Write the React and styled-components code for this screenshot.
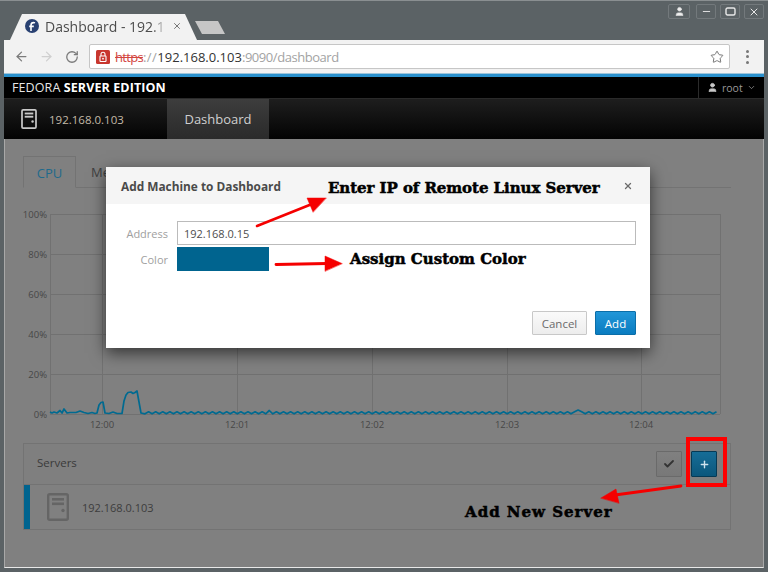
import React from 'react';
import styled, { createGlobalStyle } from 'styled-components';
import { ArrowLeft, ArrowRight, RotateCw, Star, X, Minus, Check, Plus, ChevronDown, User } from 'lucide-react';

const Global = createGlobalStyle`
  html, body { margin: 0; padding: 0; background: #5b6265; }
  * { box-sizing: border-box; }
`;

const Frame = styled.div`
  position: relative;
  width: 768px;
  height: 572px;
  overflow: hidden;
  display: flex;
  flex-direction: column;
  padding: 2px 4px 4px 4px;
  background: #5b6265;
  box-shadow: inset 0 1px #8a8f91;
  font-family: "Open Sans", "Liberation Sans", sans-serif;
`;

const TitleBar = styled.div`
  height: 38px;
  display: flex;
  align-items: flex-end;
  flex: none;
  position: relative;
`;

const ActiveTab = styled.div`
  width: 187px;
  height: 26px;
  margin-left: 6px;
  padding: 0 0 2px 15px;
  display: flex;
  align-items: center;
  background: #f2f2f2;
  clip-path: polygon(0 100%, 12px 0, 175px 0, 187px 100%);
  color: #4c4c4c;
  font-size: 14px;
  white-space: nowrap;
`;

const TabTitle = styled.span`
  margin-left: 6px;
  width: 122px;
  -webkit-mask-image: linear-gradient(to right, #000 88%, transparent);
  mask-image: linear-gradient(to right, #000 88%, transparent);
`;

const TabClose = styled.span`
  display: flex;
  margin-left: 5px;
  color: #777;
`;

const NewTab = styled.div`
  width: 30px;
  height: 13px;
  margin: 0 0 6px -2px;
  background: #c6c6c6;
  clip-path: polygon(0 0, 23px 0, 30px 100%, 7px 100%);
`;

const WindowControls = styled.div`
  display: flex;
  align-items: flex-start;
  gap: 4px;
  margin-left: auto;
  align-self: flex-start;
  padding: 2px 0 0 0;
`;

const ControlButton = styled.div`
  width: ${p => p.$w || 20}px;
  height: 15px;
  border: 1px solid #73797c;
  border-radius: 2px;
  display: flex;
  align-items: center;
  justify-content: center;
  color: #e8e8e8;
  margin-right: ${p => p.$gap || 0}px;
`;

const Toolbar = styled.div`
  height: 33px;
  flex: none;
  background: #f2f2f2;
  display: flex;
  align-items: center;
  padding: 0 0 0 5px;
`;

const NavIcon = styled.div`
  width: 25px;
  display: flex;
  justify-content: center;
  color: ${p => (p.$off ? '#cfcfcf' : '#7b7b7b')};
`;

const Omnibox = styled.div`
  margin-left: 5px;
  width: 641px;
  height: 25px;
  background: #fff;
  border: 1px solid #c6c6c6;
  border-radius: 2px;
  display: flex;
  align-items: center;
  padding: 0 5px 0 6px;
  font-size: 13px;
  color: #a3a3a3;
  white-space: nowrap;
`;

const StrikeScheme = styled.span`
  color: #d2453f;
  text-decoration: line-through;
  margin-left: 5px;
  letter-spacing: -0.7px;
`;

const Separator = styled.span`
  letter-spacing: 0.5px;
`;

const Host = styled.span`
  color: #333;
`;

const PathPart = styled.span`
  letter-spacing: -0.45px;
`;

const StarIcon = styled.div`
  margin-left: auto;
  display: flex;
  color: #6e6e6e;
`;

const MenuDots = styled.div`
  display: flex;
  flex-direction: column;
  gap: 2.5px;
  margin-left: 16px;
`;

const Dot = styled.i`
  width: 3px;
  height: 3px;
  border-radius: 50%;
  background: #777;
`;

const AccentLine = styled.div`
  height: 4px;
  flex: none;
  background: #2a90cc;
  border-top: 1px solid #9fc4da;
`;

const TopBar = styled.div`
  height: 22px;
  flex: none;
  background: #000;
  display: flex;
  align-items: stretch;
  justify-content: space-between;
  border-bottom: 1px solid #2a2a2a;
`;

const Brand = styled.div`
  padding-left: 8px;
  font-size: 12.5px;
  line-height: 21px;
  color: #e6e6e6;
  letter-spacing: 0.1px;
  b { font-weight: 700; color: #fff; }
`;

const UserMenu = styled.div`
  width: 66px;
  border-left: 1px solid #2b2b2b;
  display: flex;
  align-items: center;
  gap: 4px;
  padding-left: 8px;
  color: #9a9a9a;
  font-size: 10.5px;
`;

const NavBar = styled.div`
  height: 40px;
  flex: none;
  background: linear-gradient(#1e1e1e, #030303);
  display: flex;
  align-items: stretch;
`;

const HostCell = styled.div`
  width: 163px;
  display: flex;
  align-items: center;
  padding-left: 17px;
  gap: 12px;
  font-size: 11.5px;
  color: #c4baa8;
`;

const NavTab = styled.div`
  width: 102px;
  display: flex;
  align-items: center;
  justify-content: center;
  background: linear-gradient(#3d3d3d, #2a2a2a);
  color: #d0d0d0;
  font-size: 13px;
`;

const Page = styled.div`
  position: relative;
  flex: 1;
  background: #808080;
  padding: 18px 0 0 18px;
  border-bottom: 1px solid #e8e8e8;
  border-right: 1px solid #a8a8a8;
  border-left: 1px solid #a8a8a8;
`;

const Tabs = styled.div`
  width: 708px;
  height: 31px;
  display: flex;
  align-items: flex-end;
  border-bottom: 1px solid #737373;
`;

const Tab = styled.div`
  height: 31px;
  padding: 1px 15px 0;
  display: flex;
  align-items: center;
  font-size: 13px;
  color: #3f3f3f;
  ${p => p.$active && `
    width: 53px;
    padding: 1px 0 0;
    justify-content: center;
    color: #1e6a8c;
    border: 1px solid #737373;
    border-bottom: 1px solid #808080;
    margin-bottom: -1px;
    height: 32px;
  `}
`;

const ChartSvg = styled.svg`
  display: block;
  margin-top: 17px;
  width: 708px;
  height: 238px;
  font-family: "Open Sans", sans-serif;
`;

const Panel = styled.div`
  width: 708px;
  height: 87px;
  border: 1px solid #737373;
  display: flex;
  flex-direction: column;
`;

const PanelHead = styled.div`
  height: 41px;
  flex: none;
  border-bottom: 1px solid #737373;
  background: #7f7f7f;
  display: flex;
  align-items: center;
  padding: 0 13px 0 13px;
  font-size: 11.5px;
  color: #3a3a3a;
`;

const PanelTitle = styled.span`
  margin-bottom: 3px;
`;

const HeadActions = styled.div`
  margin-left: auto;
  display: flex;
  gap: 9px;
`;

const SquareBtn = styled.div`
  width: 26px;
  height: 26px;
  border-radius: 1px;
  display: flex;
  align-items: center;
  justify-content: center;
  ${p => p.$primary ? `
    background: linear-gradient(#166d97, #0b577c);
    border: 1px solid #053a55;
    color: #cfe3ee;
  ` : `
    background: linear-gradient(#808080, #787878);
    border: 1px solid #6a6a6a;
    color: #333;
  `}
`;

const ServerRow = styled.div`
  flex: 1;
  display: flex;
  align-items: center;
  border-left: 6px solid #00648f;
  padding-left: 17px;
  gap: 13px;
  font-size: 11px;
  color: #3d3d3d;
`;

const Modal = styled.div`
  position: absolute;
  left: 101px;
  top: 28px;
  width: 544px;
  height: 181px;
  background: #fff;
  box-shadow: 0 5px 15px rgba(0, 0, 0, 0.6);
  display: flex;
  flex-direction: column;
  color: #333;
`;

const ModalHead = styled.div`
  height: 37px;
  flex: none;
  background: #f5f5f5;
  display: flex;
  align-items: center;
  justify-content: space-between;
  padding: 0 17px 0 15px;
  font-size: 11.85px;
  font-weight: 700;
  color: #4a4a4a;
`;

const CloseBtn = styled.div`
  display: flex;
  color: #6b6b6b;
`;

const Form = styled.div`
  display: grid;
  grid-template-columns: 47px 459px;
  column-gap: 9px;
  row-gap: 2px;
  padding: 17px 14px 0 15px;
  align-items: center;
`;

const Label = styled.div`
  text-align: right;
  font-size: 11px;
  color: #a0a0a0;
`;

const Input = styled.div`
  height: 24px;
  border: 1px solid #bbb;
  display: flex;
  align-items: center;
  padding: 0 6px;
  font-size: 11px;
  color: #4d4d4d;
`;

const Swatch = styled.div`
  width: 92px;
  height: 24px;
  background: #00648f;
`;

const ModalFoot = styled.div`
  margin-top: auto;
  display: flex;
  justify-content: flex-end;
  gap: 8px;
  padding: 0 14px 13px 0;
`;

const Btn = styled.div`
  height: 24px;
  width: ${p => p.$w}px;
  display: flex;
  align-items: center;
  justify-content: center;
  font-size: 11.5px;
  border-radius: 1px;
  ${p => p.$primary ? `
    background: linear-gradient(#2196d8, #0a7cc0);
    border: 1px solid #0b6ea8;
    color: #fff;
  ` : `
    background: linear-gradient(#fafafa, #ededed);
    border: 1px solid #c8c8c8;
    color: #6b6b6b;
  `}
`;

const Annotations = styled.svg`
  position: absolute;
  left: 0;
  top: 0;
  width: 768px;
  height: 572px;
  pointer-events: none;
`;

const Note = styled.div`
  position: absolute;
  left: ${p => p.$x}px;
  top: ${p => p.$y}px;
  font-family: "DejaVu Serif", "Liberation Serif", serif;
  font-weight: 700;
  font-size: 15px;
  line-height: 20px;
  letter-spacing: ${p => p.$ls || 0}px;
  color: #000;
  white-space: nowrap;
  -webkit-text-stroke: 0.5px #000;
`;

const RedBox = styled.div`
  position: absolute;
  left: 686px;
  top: 437px;
  width: 41px;
  height: 50px;
  border: 4px solid #f00;
`;

const ServerGlyph = ({ size = 16, h = 22, color = '#bbb' }) => (
  <svg width={size} height={h} viewBox="0 0 22 28" fill="none">
    <rect x="1.2" y="1.2" width="19.6" height="25.6" rx="1.5" stroke={color} strokeWidth="2.4" />
    <rect x="5" y="5" width="12" height="2.6" fill={color} />
    <rect x="5" y="9.5" width="12" height="2.6" fill={color} />
    <circle cx="16" cy="17.5" r="1.7" fill={color} />
  </svg>
);

const FedoraLogo = () => (
  <svg width="14" height="14" viewBox="0 0 14 14">
    <circle cx="7" cy="7" r="7" fill="#294172" />
    <path d="M6 12V6.2C6 4.6 7 3.6 8.6 3.6c.6 0 1 .1 1.4.3M4.2 7.4h4.6" stroke="#fff" strokeWidth="1.6" fill="none" />
  </svg>
);

const LockBadge = () => (
  <svg width="14" height="14" viewBox="0 0 14 14">
    <rect width="14" height="14" rx="1.5" fill="#c8362e" />
    <rect x="4" y="6" width="6" height="5.5" rx="0.6" fill="none" stroke="#fff" strokeWidth="1.1" />
    <path d="M5 6V4.3a2 2 0 0 1 4 0V6" fill="none" stroke="#fff" strokeWidth="1.1" />
    <circle cx="7" cy="8.7" r="0.9" fill="#fff" />
  </svg>
);

const buildLine = () => {
  const pts = [];
  const special = {
    50: 412, 52: 413, 54: 412, 57: 413, 60: 410.5, 62: 413, 64: 409, 67: 413, 70: 412.5, 76: 412.5, 80: 411, 84: 412.5,
    88: 413.5, 92: 412.5, 95: 413.5, 97: 413,
    99: 405, 101: 402.5, 103: 402, 105: 413, 109: 413.5, 113: 412, 117: 413.5, 122: 413.5,
    124: 401, 126: 395, 128: 392.5, 131: 392, 133: 393.5, 135: 392.5, 137: 391, 139: 402, 141: 413,
  };
  Object.keys(special).map(Number).sort((a, b) => a - b).forEach(x => pts.push([x, special[x]]));
  let x = 145;
  let i = 0;
  while (x <= 720) {
    const bump = x > 575 && x < 580 ? 410 : (x > 266 && x < 270 ? 410.5 : (i % 2 ? 411.8 : 413.8));
    pts.push([x, bump]);
    x += 3.55;
    i += 1;
  }
  return pts.map(([a, b], n) => `${n ? 'L' : 'M'}${(a - 23).toFixed(1)} ${(b - 205).toFixed(1)}`).join(' ');
};

const Chart = () => {
  const grid = '#717171';
  const ys = [['100%', 9], ['80%', 49], ['60%', 89], ['40%', 129], ['20%', 169], ['0%', 209]];
  const xs = [['12:00', 79], ['12:01', 214], ['12:02', 349], ['12:03', 484], ['12:04', 618]];
  return (
    <ChartSvg viewBox="0 0 708 238">
      {ys.map(([t, y]) => (
        <g key={t}>
          <line x1="27" x2="697" y1={y + 0.5} y2={y + 0.5} stroke={grid} />
          <text x="24" y={y + 3.5} fontSize="9.5" textAnchor="end" fill="#474747">{t}</text>
        </g>
      ))}
      <line x1="27.5" x2="27.5" y1="9" y2="209" stroke={grid} />
      <line x1="697.5" x2="697.5" y1="9" y2="209" stroke={grid} />
      {xs.map(([t, x]) => (
        <g key={t}>
          <line x1={x + 0.5} x2={x + 0.5} y1="9" y2="209" stroke={grid} />
          <text x={x} y="223" fontSize="9.5" textAnchor="middle" fill="#474747">{t}</text>
        </g>
      ))}
      <path d={buildLine()} fill="none" stroke="#006a90" strokeWidth="1.7" strokeLinejoin="round" />
    </ChartSvg>
  );
};

export default function App() {
  return (
    <Frame>
      <Global />
      <TitleBar>
        <ActiveTab>
          <FedoraLogo />
          <TabTitle>Dashboard - 192.1</TabTitle>
          <TabClose><X size={10} strokeWidth={2.4} /></TabClose>
        </ActiveTab>
        <NewTab />
        <WindowControls>
          <ControlButton $w={22} $gap={2}><User size={11} fill="#eee" strokeWidth={1.5} /></ControlButton>
          <ControlButton><Minus size={11} strokeWidth={2} /></ControlButton>
          <ControlButton><svg width="11" height="9"><rect x="1" y="1" width="9" height="7" rx="1.5" fill="none" stroke="#e8e8e8" strokeWidth="1.4" /></svg></ControlButton>
          <ControlButton><X size={12} strokeWidth={2} /></ControlButton>
        </WindowControls>
      </TitleBar>
      <Toolbar>
        <NavIcon><ArrowLeft size={15} strokeWidth={2} /></NavIcon>
        <NavIcon $off><ArrowRight size={15} strokeWidth={2} /></NavIcon>
        <NavIcon><RotateCw size={14} strokeWidth={2.2} /></NavIcon>
        <Omnibox>
          <LockBadge />
          <StrikeScheme>https</StrikeScheme><Separator>://</Separator><Host>192.168.0.103</Host><PathPart>:9090/dashboard</PathPart>
          <StarIcon><Star size={14} strokeWidth={1.6} /></StarIcon>
        </Omnibox>
        <MenuDots><Dot /><Dot /><Dot /></MenuDots>
      </Toolbar>
      <AccentLine />
      <TopBar>
        <Brand>FEDORA <b>SERVER EDITION</b></Brand>
        <UserMenu>
          <User size={11} fill="#c8c8c8" color="#c8c8c8" />
          root
          <ChevronDown size={9} strokeWidth={2} />
        </UserMenu>
      </TopBar>
      <NavBar>
        <HostCell>
          <ServerGlyph size={16} h={20} color="#c9c9c9" />
          192.168.0.103
        </HostCell>
        <NavTab>Dashboard</NavTab>
      </NavBar>
      <Page>
        <Tabs>
          <Tab $active>CPU</Tab>
          <Tab>Memory</Tab>
        </Tabs>
        <Chart />
        <Panel>
          <PanelHead>
            <PanelTitle>Servers</PanelTitle>
            <HeadActions>
              <SquareBtn><Check size={12} strokeWidth={3.6} /></SquareBtn>
              <SquareBtn $primary><Plus size={11} strokeWidth={3} /></SquareBtn>
            </HeadActions>
          </PanelHead>
          <ServerRow>
            <ServerGlyph size={22} h={28} color="#656565" />
            192.168.0.103
          </ServerRow>
        </Panel>
        <Modal>
          <ModalHead>
            Add Machine to Dashboard
            <CloseBtn><X size={10} strokeWidth={3} /></CloseBtn>
          </ModalHead>
          <Form>
            <Label>Address</Label>
            <Input>192.168.0.15</Input>
            <Label>Color</Label>
            <Swatch />
          </Form>
          <ModalFoot>
            <Btn $w={55}>Cancel</Btn>
            <Btn $w={41} $primary>Add</Btn>
          </ModalFoot>
        </Modal>
      </Page>
      <Annotations viewBox="0 0 768 572">
        <g fill="#f50000" stroke="#f50000" strokeLinecap="round">
          <line x1="257" y1="226" x2="312" y2="204" strokeWidth="2.6" />
          <polygon points="326,198 307,198 313,212" strokeWidth="0.5" />
          <line x1="276" y1="264.5" x2="327" y2="263.5" strokeWidth="2.8" />
          <polygon points="342,263.5 325,256 325,271" strokeWidth="0.5" />
          <line x1="681" y1="486" x2="615" y2="495" strokeWidth="2.8" />
          <polygon points="601,498 616,489 619,503" strokeWidth="0.5" />
        </g>
      </Annotations>
      <Note $x={328} $y={178} $ls={-0.06}>Enter IP of Remote Linux Server</Note>
      <Note $x={350} $y={249}>Assign Custom Color</Note>
      <Note $x={465} $y={502} $ls={1}>Add New Server</Note>
      <RedBox />
    </Frame>
  );
}
